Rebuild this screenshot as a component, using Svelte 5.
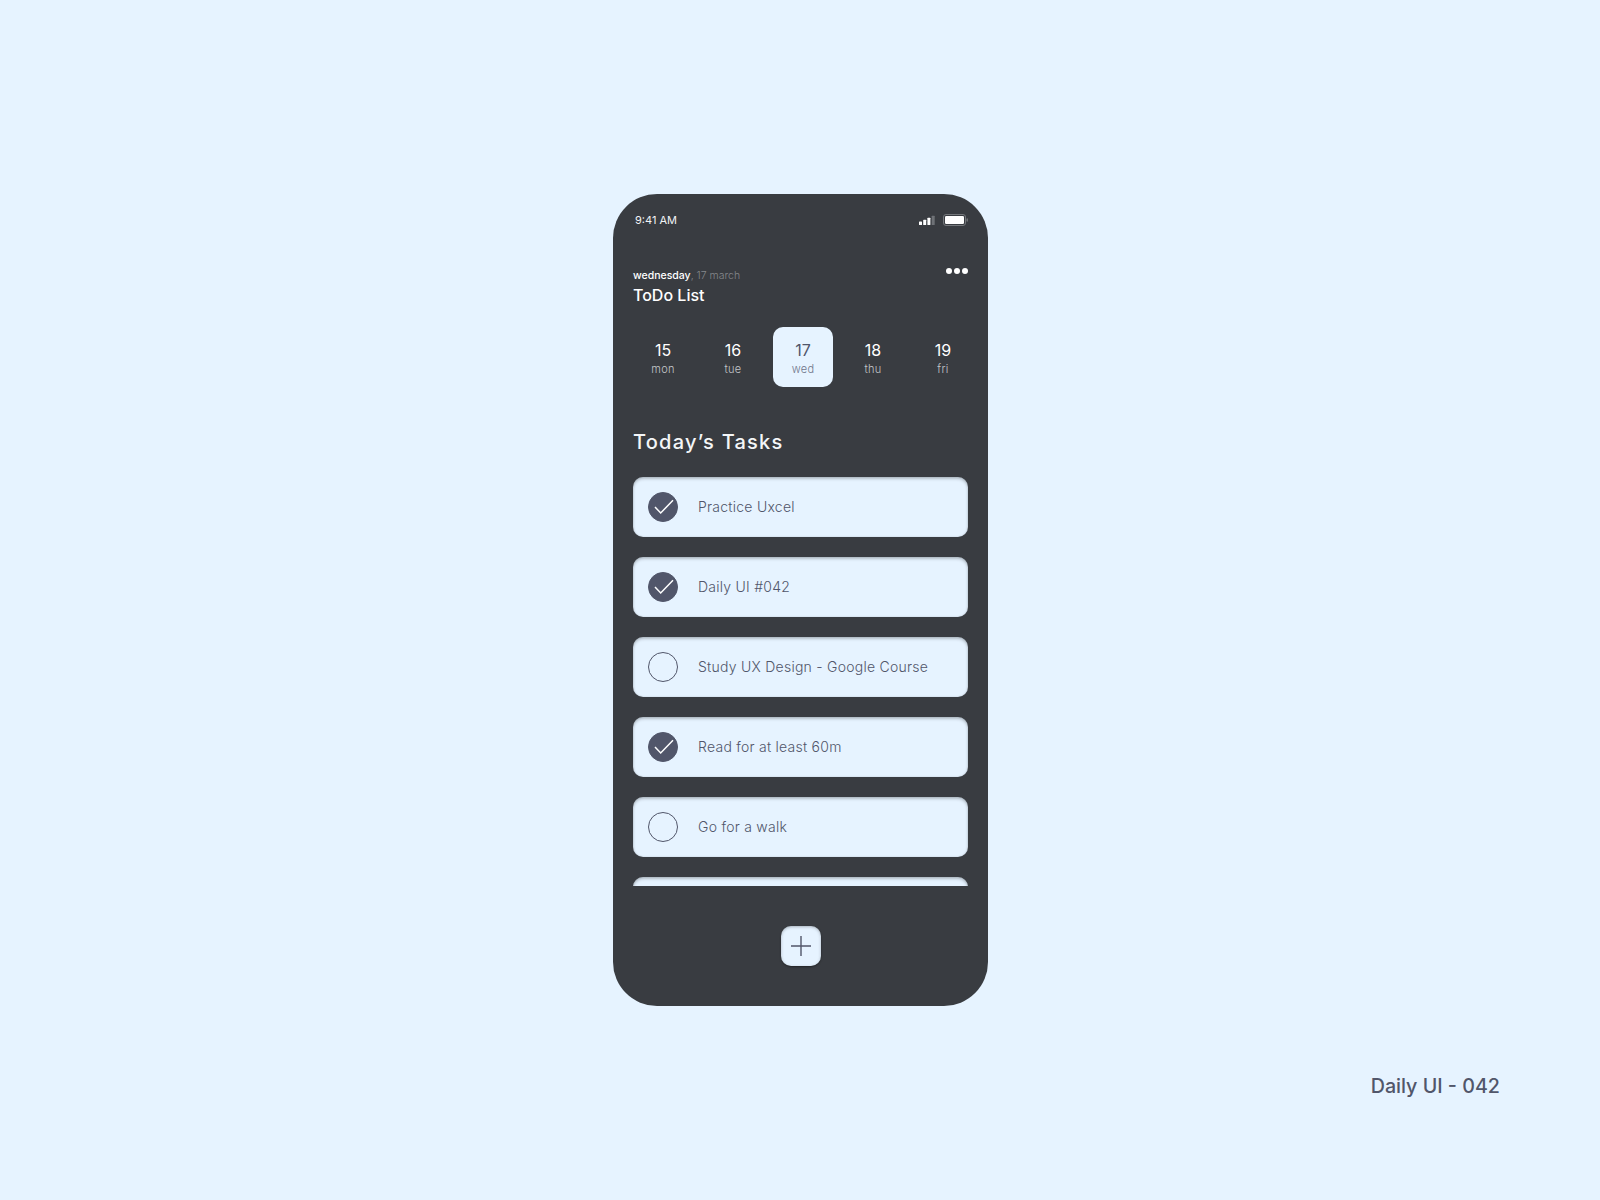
<script>
	const days = [
		{ num: 15, name: "mon" },
		{ num: 16, name: "tue" },
		{ num: 17, name: "wed", active: true },
		{ num: 18, name: "thu" },
		{ num: 19, name: "fri" }
	];
	const tasks = [
		{ label: "Practice Uxcel", done: true },
		{ label: "Daily UI #042", done: true },
		{ label: "Study UX Design - Google Course", done: false },
		{ label: "Read for at least 60m", done: true },
		{ label: "Go for a walk", done: false },
		{ label: "", done: false }
	];
</script>

<div class="page">
	<div class="phone">
		<div class="status">
			<span class="time">9:41 AM</span>
			<div class="status-icons">
				<svg width="16" height="10" viewBox="0 0 16 10">
					<rect x="0" y="6.5" width="3" height="3.5" rx="0.6" fill="#fff" />
					<rect x="4.2" y="4.7" width="3" height="5.3" rx="0.6" fill="#fff" />
					<rect x="8.4" y="2.7" width="3" height="7.3" rx="0.6" fill="#fff" />
					<rect x="12.7" y="0.7" width="3" height="9.3" rx="0.6" fill="#6e7176" />
				</svg>
				<svg width="25" height="12" viewBox="0 0 25 12">
					<rect x="0.5" y="0.5" width="22" height="11" rx="2.5" fill="none" stroke="#74777b" />
					<rect x="2" y="2" width="19" height="8" rx="1.2" fill="#fff" />
					<rect x="23.5" y="4.2" width="1.4" height="3.6" rx="0.7" fill="#74777b" />
				</svg>
			</div>
		</div>

		<header class="head">
			<div>
				<div class="date"><b>wednesday</b><span>, 17 march</span></div>
				<h1>ToDo List</h1>
			</div>
			<div class="dots"><i></i><i></i><i></i></div>
		</header>

		<div class="days">
			{#each days as d}
				<div class="day" class:active={d.active}>
					<span class="num">{d.num}</span>
					<span class="name">{d.name}</span>
				</div>
			{/each}
		</div>

		<h2>Today’s Tasks</h2>

		<div class="tasks">
			{#each tasks as t}
				<div class="task">
					<span class="check" class:done={t.done}>
						{#if t.done}
							<svg width="30" height="30" viewBox="0 0 30 30">
								<path d="M7 15 L12.7 21 L25 8.3" fill="none" stroke="#fff" stroke-width="1.5" />
							</svg>
						{/if}
					</span>
					<span class="label">{t.label}</span>
				</div>
			{/each}
		</div>

		<div class="foot">
			<button class="add" aria-label="Add task">
				<svg width="20" height="20" viewBox="0 0 20 20">
					<path d="M10 0 V20 M0 10 H20" stroke="#51566a" stroke-width="1.4" fill="none" />
				</svg>
			</button>
		</div>
	</div>

	<div class="credit">Daily UI - 042</div>
</div>

<style>
	:global(body) {
		margin: 0;
		background: #e6f3ff;
		font-family: "Inter", "Open Sans", sans-serif;
	}
	.page {
		display: flex;
		flex-direction: column;
		height: 1200px;
		box-sizing: border-box;
		padding-top: 194px;
		padding-left: 613px;
		overflow: hidden;
	}
	.phone {
		width: 375px;
		height: 812px;
		flex: none;
		box-sizing: border-box;
		background: #393c41;
		border-radius: 44px;
		padding: 0 20px;
		display: flex;
		flex-direction: column;
		color: #fff;
	}
	.status {
		display: flex;
		justify-content: space-between;
		align-items: center;
		height: 52px;
		padding: 0 1px 0 2px;
	}
	.time {
		font-size: 11px;
		font-weight: 400;
		color: #f1f3f5;
	}
	.status-icons {
		display: flex;
		align-items: center;
		gap: 8px;
		margin-right: -1px;
	}
	.status-icons svg {
		display: block;
	}
	.head {
		display: flex;
		justify-content: space-between;
		align-items: flex-start;
		margin-top: 23px;
	}
	.date {
		font-size: 10.5px;
		line-height: 14px;
		color: #85888c;
		font-weight: 300;
	}
	.date b {
		font-weight: 500;
		color: #fff;
	}
	h1 {
		margin: 1px 0 0;
		font-size: 16px;
		line-height: 22px;
		font-weight: 500;
	}
	.dots {
		display: flex;
		gap: 2px;
		margin-top: -1px;
	}
	.dots i {
		width: 6px;
		height: 6px;
		border-radius: 50%;
		background: #fff;
	}
	.days {
		display: grid;
		grid-template-columns: repeat(5, 60px);
		gap: 10px;
		margin-top: 21px;
	}
	.day {
		height: 60px;
		border-radius: 10px;
		display: flex;
		flex-direction: column;
		align-items: center;
		padding-top: 12px;
		box-sizing: border-box;
	}
	.day.active {
		background: #e6f3ff;
		color: #51566a;
	}
	.num {
		font-size: 16px;
		line-height: 22px;
		font-weight: 400;
	}
	.name {
		font-size: 11px;
		line-height: 14px;
		font-weight: 300;
		letter-spacing: 0.3px;
		color: #c4c6c9;
		margin-top: 1px;
	}
	.active .name {
		color: #70758a;
	}
	h2 {
		margin: 40px 0 0;
		font-size: 20px;
		line-height: 30px;
		font-weight: 500;
		letter-spacing: 1.25px;
		color: #f4f6f8;
	}
	.tasks {
		margin-top: 20px;
		height: 409px;
		overflow: hidden;
		display: flex;
		flex-direction: column;
		gap: 20px;
		flex: none;
	}
	.task {
		flex: none;
		height: 60px;
		border-radius: 10px;
		background: #e6f3ff;
		box-shadow: inset 0 2px 3px rgba(57, 60, 65, 0.28), inset 0 0 2px rgba(57, 60, 65, 0.2);
		display: flex;
		align-items: center;
		padding-left: 15px;
		gap: 20px;
	}
	.check {
		width: 30px;
		height: 30px;
		border-radius: 50%;
		box-sizing: border-box;
		border: 1px solid #51566a;
		display: block;
	}
	.check.done {
		background: #51566a;
	}
	.check svg {
		display: block;
		margin: -1px;
	}
	.label {
		font-size: 14px;
		font-weight: 300;
		color: #51566a;
		letter-spacing: 0.25px;
		padding-bottom: 2px;
	}
	.foot {
		display: flex;
		justify-content: center;
		margin-top: 40px;
	}
	.add {
		width: 40px;
		height: 40px;
		padding: 0;
		border: 0;
		border-radius: 10px;
		background: #e6f3ff;
		box-shadow: inset 0 1px 3px rgba(57, 60, 65, 0.35), 0 1px 2px rgba(0, 0, 0, 0.4);
		display: flex;
		align-items: center;
		justify-content: center;
	}
	.credit {
		align-self: flex-end;
		margin-top: 66px;
		margin-right: 100px;
		font-size: 19.7px;
		line-height: 28px;
		font-weight: 500;
		color: #51566a;
	}
</style>
